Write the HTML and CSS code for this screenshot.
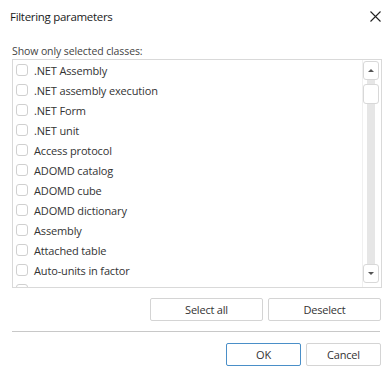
FILE: index.html
```html
<!DOCTYPE html>
<html>
<head>
<meta charset="utf-8">
<link rel="stylesheet" href="styles.css">
</head>
<body>
<div class="dialog">
  <div class="header">
    <span class="title">Filtering parameters</span>
    <svg class="close" width="11" height="11" viewBox="0 0 11 11"><path d="M0.5 0.5 L10.5 10.5 M10.5 0.5 L0.5 10.5" stroke="#222" stroke-width="1.1" fill="none"/></svg>
  </div>
  <div class="label">Show only selected classes:</div>
  <div class="listbox">
    <div class="items">
      <div class="row"><span class="cb"></span><span>.NET Assembly</span></div>
      <div class="row"><span class="cb"></span><span>.NET assembly execution</span></div>
      <div class="row"><span class="cb"></span><span>.NET Form</span></div>
      <div class="row"><span class="cb"></span><span>.NET unit</span></div>
      <div class="row"><span class="cb"></span><span>Access protocol</span></div>
      <div class="row"><span class="cb"></span><span>ADOMD catalog</span></div>
      <div class="row"><span class="cb"></span><span>ADOMD cube</span></div>
      <div class="row"><span class="cb"></span><span>ADOMD dictionary</span></div>
      <div class="row"><span class="cb"></span><span>Assembly</span></div>
      <div class="row"><span class="cb"></span><span>Attached table</span></div>
      <div class="row"><span class="cb"></span><span>Auto-units in factor</span></div>
      <div class="row"><span class="cb"></span></div>
    </div>
    <div class="scrollbar">
      <div class="sbtn"><span class="arrow up"></span></div>
      <div class="track">
        <div class="thumb"></div>
        <div class="rail"></div>
      </div>
      <div class="sbtn"><span class="arrow down"></span></div>
    </div>
  </div>
  <div class="btnrow">
    <button class="btn wide">Select all</button>
    <button class="btn wide">Deselect</button>
  </div>
  <div class="sep"></div>
  <div class="btnrow bottom">
    <button class="btn small primary">OK</button>
    <button class="btn small">Cancel</button>
  </div>
</div>
</body>
</html>
```
FILE: styles.css
```css
html, body {
  margin: 0;
  padding: 0;
  background: #fff;
}
body {
  font-family: "Open Sans", "Noto Sans", sans-serif;
  color: #333;
  width: 392px;
  height: 378px;
  overflow: hidden;
}
.dialog {
  display: flex;
  flex-direction: column;
}
.header {
  display: flex;
  align-items: center;
  justify-content: space-between;
  height: 18px;
  padding: 7px 11px 0 10px;
}
.title {
  font-size: 11.5px;
  letter-spacing: -0.3px;
  color: #1a1a1a;
}
.close {
  display: block;
}
.label {
  margin: 19px 0 0 12px;
  font-size: 10.5px;
  letter-spacing: -0.1px;
  line-height: 14px;
  height: 14px;
  color: #444;
}
.listbox {
  margin: 1px 10px 0 12px;
  height: 227px;
  border: 1px solid #d9d9d9;
  display: flex;
  overflow: hidden;
}
.items {
  flex: 1;
  overflow: hidden;
}
.row {
  height: 20px;
  display: flex;
  align-items: center;
  font-size: 11px;
  letter-spacing: -0.15px;
  color: #333;
}
.cb {
  width: 10px;
  height: 10px;
  border: 1px solid #d0d0d0;
  border-radius: 3px;
  margin: 0 6px 0 3px;
  flex-shrink: 0;
}
.scrollbar {
  width: 19px;
  border-left: 1px solid #f0f0f0;
  display: flex;
  flex-direction: column;
  align-items: center;
  padding: 1px 2px 4px 0;
  box-sizing: border-box;
}
.sbtn {
  width: 14px;
  height: 17px;
  border: 1px solid #d8d8d8;
  border-radius: 3px;
  background: #fff;
  display: flex;
  align-items: center;
  justify-content: center;
  flex-shrink: 0;
}
.arrow {
  width: 0;
  height: 0;
  border-left: 3px solid transparent;
  border-right: 3px solid transparent;
}
.arrow.up {
  border-bottom: 3px solid #555;
}
.arrow.down {
  border-top: 3px solid #555;
}
.track {
  flex: 1;
  display: flex;
  flex-direction: column;
  align-items: center;
  background: linear-gradient(#e6e6e6, #e6e6e6) center / 8px 100% no-repeat;
  width: 16px;
}
.thumb {
  margin-top: 4px;
  width: 14px;
  height: 18px;
  border: 1px solid #d8d8d8;
  border-radius: 3px;
  background: #fff;
}
.rail {
  flex: 1;
}
.btnrow {
  display: flex;
  justify-content: flex-end;
  gap: 5px;
  padding-right: 11px;
  margin-top: 10px;
}
.btn {
  font-family: "Open Sans", "Noto Sans", sans-serif;
  font-size: 11px;
  letter-spacing: -0.2px;
  color: #333;
  background: #fff;
  border: 1px solid #d4d4d4;
  border-radius: 2px;
  height: 23px;
  padding: 0;
}
.wide {
  width: 113px;
}
.small {
  width: 75px;
}
.primary {
  border-color: #4a8fc8;
}
.sep {
  margin: 10px 12px 0 12px;
  height: 1px;
  background: #c8c8c8;
}
.bottom {
  margin-top: 11px;
}
```
